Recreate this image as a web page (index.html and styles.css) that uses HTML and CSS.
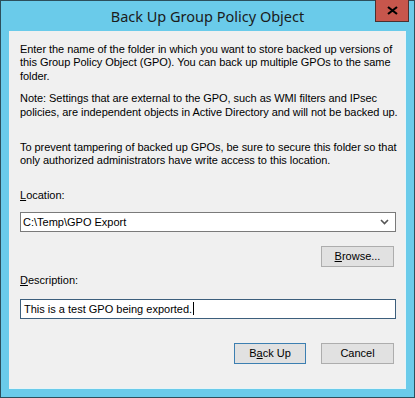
FILE: index.html
```html
<!DOCTYPE html>
<html lang="en">
<head>
    <meta charset="UTF-8">
    <meta name="viewport" content="width=device-width, initial-scale=1.0">
    <title>Back Up Group Policy Object</title>
    <link rel="stylesheet" href="styles.css">
</head>
<body>
    <div class="window">
        <div class="titlebar">
            <span class="title">Back Up Group Policy Object</span>
            <button class="close" title="Close">
                <svg width="11" height="9" viewBox="0 0 11 9">
                    <path d="M1 1 L10 8 M10 1 L1 8" stroke="#000" stroke-width="2.2" />
                </svg>
            </button>
        </div>

        <div class="content">
            <p class="intro">Enter the name of the folder in which you want to store backed up versions of<br>this Group Policy Object (GPO). You can back up multiple GPOs to the same<br>folder.</p>
            <p class="note">Note: Settings that are external to the GPO, such as WMI filters and IPsec<br>policies, are independent objects in Active Directory and will not be backed up.</p>
            <p class="warning">To prevent tampering of backed up GPOs, be sure to secure this folder so that<br>only authorized administrators have write access to this location.</p>

            <label class="field-label"><u>L</u>ocation:</label>
            <div class="combo">
                <span class="combo-value">C:\Temp\GPO Export</span>
                <svg class="combo-arrow" width="9" height="6" viewBox="0 0 9 6">
                    <path d="M1 1 L4.5 4.5 L8 1" fill="none" stroke="#555" stroke-width="1.6" />
                </svg>
            </div>

            <div class="row-right browse-row">
                <button class="btn"><u>B</u>rowse...</button>
            </div>

            <label class="field-label desc-label"><u>D</u>escription:</label>
            <div class="textbox">This is a test GPO being exported.<span class="caret"></span></div>

            <div class="row-right actions">
                <button class="btn default">B<u>a</u>ck Up</button>
                <button class="btn">Cancel</button>
            </div>
        </div>
    </div>
</body>
</html>
```

FILE: styles.css
```css
body {
    margin: 0;
    font-family: "Liberation Sans", Arial, sans-serif;
    font-size: 11px;
    color: #000;
}
.window {
    width: 415px;
    height: 398px;
    box-sizing: border-box;
    border: 1px solid #2c4f5c;
    background-color: #6acbea;
    padding: 0 8px 8px 8px;
    display: flex;
    flex-direction: column;
}
.titlebar {
    height: 30px;
    flex-shrink: 0;
    display: flex;
    justify-content: center;
    align-items: center;
    position: relative;
}
.title {
    font-family: "Noto Sans", sans-serif;
    font-size: 14.5px;
    color: #1b1b1b;
    margin-top: -1px;
}
.close {
    position: absolute;
    top: -1px;
    right: -3px;
    width: 34px;
    height: 22px;
    padding: 0;
    background-color: #c7564c;
    border: 1px solid #4a3030;
    border-top: none;
    display: flex;
    align-items: center;
    justify-content: center;
}
.content {
    flex: 1;
    background-color: #f0f0f0;
    padding: 12px 9px 0 11px;
    border-right: 1px solid #e6f4f8;
    border-bottom: 1px solid #e6f4f8;
}
p {
    margin: 0;
    line-height: 13.4px;
    white-space: nowrap;
    letter-spacing: -0.05px;
}
.note {
    margin-top: 9px;
}
.warning {
    margin-top: 22px;
}
.field-label {
    display: block;
    margin-top: 21px;
    line-height: 13px;
}
.combo {
    margin-top: 10px;
    height: 20px;
    box-sizing: border-box;
    border: 1px solid #7a7a7a;
    background-color: #fff;
    display: flex;
    align-items: center;
    padding: 0 6px 0 2px;
}
.combo-value {
    flex: 1;
}
.row-right {
    display: flex;
    justify-content: flex-end;
    gap: 15px;
}
.browse-row {
    margin-top: 14px;
    padding-right: 2px;
}
.btn {
    width: 73px;
    height: 21px;
    padding: 0;
    font-family: "Liberation Sans", Arial, sans-serif;
    font-size: 11px;
    color: #000;
    background-color: #e1e1e1;
    border: 1px solid #adadad;
}
.btn.default {
    width: 72px;
    border-color: #3c7fb1;
}
.desc-label {
    margin-top: 7px;
}
.textbox {
    margin-top: 12px;
    height: 20px;
    box-sizing: border-box;
    border: 1px solid #3c5e7c;
    background-color: #fff;
    padding: 0 3px;
    display: flex;
    align-items: center;
}
.caret {
    display: inline-block;
    width: 1px;
    height: 13px;
    background-color: #000;
    margin-left: 1px;
}
.actions {
    margin-top: 24px;
    padding-right: 2px;
}
```
